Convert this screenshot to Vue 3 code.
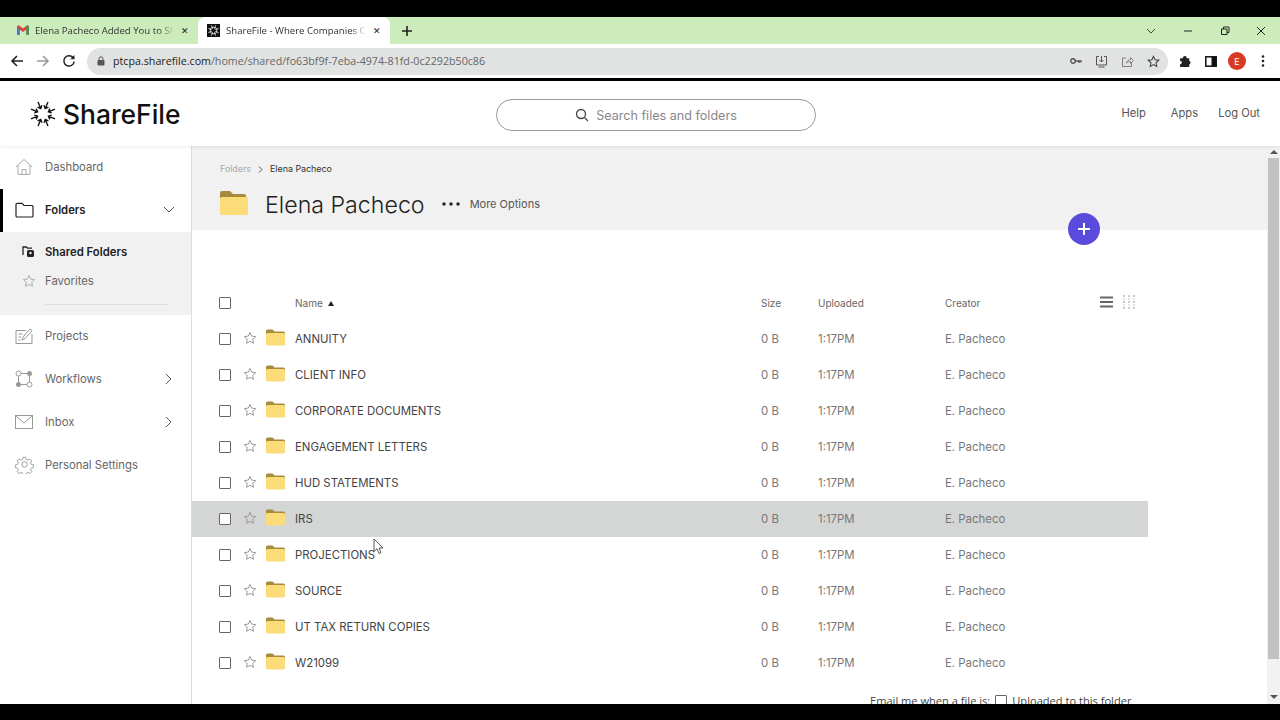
<template>
  <div class="screen">
    <div class="black-top"></div>

    <!-- chrome tabs -->
    <div class="tabstrip">
      <div class="tab">
        <svg class="favicon" width="12" height="10" viewBox="0 0 12 10">
          <path d="M0 1.5V10h2.6V4.500L6 7l3.4-2.5V10H12V1.500L10.500 0 6 3.400 1.500 0z" fill="#d9453a" />
          <path d="M9.400 4.500V10H12V1.500L10.500 0 9.400 1z" fill="#4a8f5c" />
          <path d="M0 1.500V10h2.600V4.500z" fill="#4d76c9" />
        </svg>
        <span class="tab-title">Elena Pacheco Added You to Sh</span>
        <span class="tab-x">✕</span>
      </div>
      <div class="tab active">
        <span class="sf-favicon">
          <svg width="11" height="11" viewBox="0 0 24 24"><path :d="burst" stroke="#fff" stroke-width="1.8" fill="none" /></svg>
        </span>
        <span class="tab-title">ShareFile - Where Companies Cc</span>
        <span class="tab-x">✕</span>
      </div>
      <svg class="new-tab" width="12" height="12" viewBox="0 0 12 12"><path d="M6 1v10M1 6h10" stroke="#222" stroke-width="1.6" /></svg>
      <div class="strip-right">
        <svg width="10" height="6" viewBox="0 0 10 6"><path d="M1 1l4 4 4-4" stroke="#444" fill="none" /></svg>
        <svg class="win-min" width="10" height="10" viewBox="0 0 10 10"><path d="M1 5h8" stroke="#222" /></svg>
        <svg class="win-max" width="10" height="10" viewBox="0 0 10 10"><path d="M1.500 3h5.500v5.500H1.500zM3.500 3V1h5.500v5.500H7" stroke="#222" fill="none" /></svg>
        <svg class="win-close" width="10" height="10" viewBox="0 0 10 10"><path d="M1 1l8 8M9 1l-8 8" stroke="#222" /></svg>
      </div>
    </div>

    <!-- chrome toolbar -->
    <div class="toolbar">
      <div class="nav-btns">
        <svg width="14" height="14" viewBox="0 0 14 14"><path d="M13 7H2M7 2L2 7l5 5" stroke="#222" stroke-width="1.6" fill="none" /></svg>
        <svg width="14" height="14" viewBox="0 0 14 14"><path d="M1 7h11M7 2l5 5-5 5" stroke="#999" stroke-width="1.6" fill="none" /></svg>
        <svg width="14" height="14" viewBox="0 0 14 14"><path d="M11.500 4.200A5.200 5.200 0 1 0 12.200 7.500" stroke="#222" stroke-width="1.5" fill="none" /><path d="M12.500 1v4.200H8.300z" fill="#222" /></svg>
      </div>
      <div class="addressbar">
        <svg width="8" height="10" viewBox="0 0 8 10"><path d="M2 4V2.800a2 2 0 0 1 4 0V4" stroke="#555" fill="none" /><rect x="0.5" y="4" width="7" height="5.500" rx="1" fill="#555" /></svg>
        <span class="url"><b>ptcpa.sharefile.com</b>/home/shared/fo63bf9f-7eba-4974-81fd-0c2292b50c86</span>
        <div class="addr-icons">
          <svg width="12" height="8" viewBox="0 0 12 8"><circle cx="3" cy="4" r="2.200" stroke="#555" stroke-width="1.4" fill="none" /><path d="M5 4h6.500M9 4v2M11 4v1.500" stroke="#555" stroke-width="1.4" fill="none" /></svg>
          <svg width="13" height="13" viewBox="0 0 13 13"><path d="M4 1.500H1.500v8.500h10V1.500H9M6.500 1v6M4.500 5l2 2 2-2M3.500 12h6" stroke="#555" fill="none" /></svg>
          <svg width="13" height="13" viewBox="0 0 13 13"><path d="M5 3H1.500v8.500h9V8M5.500 8C6 5.500 8 4.500 9.500 4.500V2.500L12.500 5.500 9.500 8.500V6.500C8 6.500 6.500 7 5.500 8z" stroke="#777" stroke-width="0.9" fill="none" /></svg>
          <svg width="13" height="13" viewBox="0 0 24 24"><path :d="star" stroke="#444" stroke-width="2" fill="none" /></svg>
        </div>
      </div>
      <div class="ext-icons">
        <svg width="14" height="14" viewBox="0 0 13 13"><path d="M1 4h2.500a2 2 0 0 1 3.500-1.500V4h2.500v2.300a1.800 1.800 0 0 1 0 3.400V12H1V9.500a1.800 1.800 0 0 0 1.500-2.500A1.800 1.800 0 0 0 1 6.500z" fill="#222" /></svg>
        <svg width="12" height="11" viewBox="0 0 12 11"><rect x="0.8" y="0.8" width="10.400" height="9.400" stroke="#111" stroke-width="1.5" fill="#fff" /><rect x="6.500" y="1" width="5" height="9" fill="#111" /></svg>
        <span class="avatar">E</span>
        <svg width="4" height="12" viewBox="0 0 4 12"><circle cx="2" cy="1.500" r="1.3" fill="#222" /><circle cx="2" cy="6" r="1.3" fill="#222" /><circle cx="2" cy="10.500" r="1.3" fill="#222" /></svg>
      </div>
    </div>
    <div class="black-line"></div>

    <!-- sharefile header -->
    <header class="app-header">
      <div class="brand">
        <svg width="26" height="26" viewBox="0 0 24 24"><path :d="burst" stroke="#111" stroke-width="1.25" fill="none" /></svg>
        <span>ShareFile</span>
      </div>
      <div class="search">
        <svg width="14" height="14" viewBox="0 0 14 14"><circle cx="6" cy="6" r="4.500" stroke="#444" stroke-width="1.3" fill="none" /><path d="M9.500 9.500L13 13" stroke="#444" stroke-width="1.3" /></svg>
        <span>Search files and folders</span>
      </div>
      <nav class="top-links">
        <a>Help</a>
        <a>Apps</a>
        <a>Log Out</a>
      </nav>
    </header>

    <div class="body">
      <aside class="sidebar">
        <div class="nav-item">
          <svg width="18" height="18" viewBox="0 0 18 18"><path d="M1 9l8-7.500L17 9M3 7.500V16.500h12V7.500M7 16.500V11.500h4v5" stroke="#aaa" fill="none" /></svg>
          <span>Dashboard</span>
        </div>
        <div class="nav-item selected">
          <svg width="19" height="16" viewBox="0 0 19 16"><path d="M1 14V2.500A1.200 1.200 0 0 1 2.200 1.300H7L9 3.500H17a1 1 0 0 1 1 1V14a1 1 0 0 1-1 1H2a1 1 0 0 1-1-1z" stroke="#222" stroke-width="1.2" fill="none" /></svg>
          <span>Folders</span>
          <svg width="12" height="7" viewBox="0 0 12 7"><path d="M1 1l5 5 5-5" stroke="#555" fill="none" /></svg>
        </div>
        <div class="subnav">
          <div class="sub-item strong">
            <svg width="13" height="13" viewBox="0 0 13 13"><path d="M1 10V2h3.500l1 1.200H10" stroke="#222" stroke-width="1.3" fill="none" /><rect x="5" y="5" width="7" height="7" rx="1.5" fill="#222" /><circle cx="8.500" cy="8" r="1.2" fill="#f1f1f1" /></svg>
            <span>Shared Folders</span>
          </div>
          <div class="sub-item">
            <svg width="14" height="14" viewBox="0 0 24 24"><path :d="star" stroke="#aaa" stroke-width="1.6" fill="none" /></svg>
            <span>Favorites</span>
          </div>
          <div class="sub-rule"></div>
        </div>
        <div class="nav-item">
          <svg width="19" height="18" viewBox="0 0 19 18"><path d="M17 7v9.500H1V3.500h10" stroke="#999" fill="none" /><path d="M7 13l1-3 7-8 2 1.700-7 8zM3.500 7h4M3.500 10h2.500M3.500 13h2" stroke="#999" fill="none" /></svg>
          <span>Projects</span>
        </div>
        <div class="nav-item">
          <svg width="18" height="18" viewBox="0 0 18 18"><circle cx="3.500" cy="3.500" r="2.500" stroke="#999" fill="none" /><circle cx="14.500" cy="3.500" r="2.500" fill="#999" /><circle cx="3.500" cy="14.500" r="2.500" fill="#999" /><circle cx="14.500" cy="14.500" r="2.500" stroke="#999" fill="none" /><path d="M6 3.500h6M3.500 6v6M14.500 6v6M6 14.500h6" stroke="#999" fill="none" /></svg>
          <span>Workflows</span>
          <svg width="7" height="12" viewBox="0 0 7 12"><path d="M1 1l5 5-5 5" stroke="#555" fill="none" /></svg>
        </div>
        <div class="nav-item">
          <svg width="18" height="14" viewBox="0 0 18 14"><rect x="0.5" y="0.5" width="17" height="13" stroke="#999" fill="none" /><path d="M1 1l8 7 8-7" stroke="#999" fill="none" /></svg>
          <span>Inbox</span>
          <svg width="7" height="12" viewBox="0 0 7 12"><path d="M1 1l5 5-5 5" stroke="#555" fill="none" /></svg>
        </div>
        <div class="nav-item">
          <svg width="19" height="19" viewBox="0 0 24 24"><circle cx="12" cy="12" r="3.500" stroke="#999" stroke-width="1.2" fill="none" /><path d="M10 2h4l.6 3 2.300 1 2.600-1.700 2.800 2.800-1.700 2.600 1 2.300 3 .6v4l-3 .6-1 2.300 1.700 2.600-2.800 2.800-2.600-1.700-2.300 1-.6 3h-4l-.6-3-2.300-1-2.600 1.700-2.800-2.800 1.700-2.600-1-2.300-3-.6v-4l3-.6 1-2.300-1.700-2.600 2.800-2.800 2.600 1.700 2.300-1z" transform="translate(1.1 1.1) scale(.9)" stroke="#999" stroke-width="1.3" fill="none" /></svg>
          <span>Personal Settings</span>
        </div>
      </aside>

      <main class="content">
        <section class="folder-head">
          <div class="crumbs">
            <span class="crumb-root">Folders</span>
            <svg width="5" height="7" viewBox="0 0 5 7"><path d="M1 .5l3 3-3 3" stroke="#555" fill="none" /></svg>
            <span>Elena Pacheco</span>
          </div>
          <div class="title-row">
            <svg width="28" height="26" viewBox="0 0 28 26">
              <path d="M0 24V3a2 2 0 0 1 2-2h8l3 3h11a2 2 0 0 1 2 2v3H0z" fill="#a68a3d" />
              <path d="M1.500 25L0 24V9a2 2 0 0 1 2-2h24a2 2 0 0 1 2 2v14a2 2 0 0 1-2 2z" fill="#fbdc78" />
            </svg>
            <h1>Elena Pacheco</h1>
            <svg class="dots" width="18" height="4" viewBox="0 0 18 4"><circle cx="2" cy="2" r="1.7" fill="#222" /><circle cx="9" cy="2" r="1.7" fill="#222" /><circle cx="16" cy="2" r="1.7" fill="#222" /></svg>
            <span class="more">More Options</span>
          </div>
        </section>

        <button class="fab">
          <svg width="14" height="14" viewBox="0 0 14 14"><path d="M7 1v12M1 7h12" stroke="#fff" stroke-width="2" /></svg>
        </button>

        <div class="table">
          <div class="row head">
            <span class="box"></span>
            <span></span>
            <span></span>
            <span class="col-name">Name <i class="sort"></i></span>
            <span>Size</span>
            <span>Uploaded</span>
            <span class="col-creator">
              Creator
              <span class="views">
                <svg width="13" height="12" viewBox="0 0 13 12"><path d="M0 1.500h13M0 6h13M0 10.500h13" stroke="#666" stroke-width="2" /></svg>
                <svg width="14" height="14" viewBox="0 0 14 14"><path d="M1 1h12M1 7h12M1 13h12" stroke="#bbb" stroke-width="1.4" stroke-dasharray="2 3" fill="none" /><path d="M1 4h12M1 10h12" stroke="#ccc" stroke-dasharray="2 3" fill="none" /></svg>
              </span>
            </span>
          </div>
          <div v-for="f in folders" :key="f" class="row" :class="{ hover: f === 'IRS' }">
            <span class="box"></span>
            <svg class="row-star" width="14" height="14" viewBox="0 0 24 24"><path :d="star" stroke="#999" stroke-width="1.7" fill="none" /></svg>
            <svg class="row-folder" width="19" height="17" viewBox="0 0 19 17">
              <path d="M0 16V2a1.500 1.500 0 0 1 1.500-1.500h5l2 2h9a1.500 1.500 0 0 1 1.500 1.500v2H0z" fill="#a68a3d" />
              <path d="M1 16.500L0 16V5.500A1.500 1.500 0 0 1 1.500 4h16A1.500 1.500 0 0 1 19 5.500V15a1.500 1.500 0 0 1-1.500 1.500z" fill="#fbdc78" />
            </svg>
            <span class="cell name">{{ f }}</span>
            <span class="cell">0 B</span>
            <span class="cell">1:17PM</span>
            <span class="cell">E. Pacheco</span>
          </div>
        </div>

        <div class="email-opts">
          <span>Email me when a file is:</span>
          <span class="box"></span>
          <span>Uploaded to this folder</span>
        </div>

        <!-- mouse pointer from the recording -->
        <svg class="cursor" width="11" height="17" viewBox="0 0 11 17"><path d="M1 1v12.500l3-2.800 2 4.800 2-.9-2-4.600h4z" stroke="#333" stroke-width="0.8" fill="#fff" /></svg>

        <div class="scrollbar">
          <i class="arrow up"></i>
          <div class="thumb"></div>
          <i class="arrow down"></i>
        </div>
      </main>
    </div>

    <div class="black-bottom"></div>
  </div>
</template>

<script setup>
const folders = [
  'ANNUITY',
  'CLIENT INFO',
  'CORPORATE DOCUMENTS',
  'ENGAGEMENT LETTERS',
  'HUD STATEMENTS',
  'IRS',
  'PROJECTIONS',
  'SOURCE',
  'UT TAX RETURN COPIES',
  'W21099'
]

const star = 'M12 2.500l2.900 6.300 6.800.8-5 4.700 1.300 6.800-6-3.400-6 3.400 1.300-6.800-5-4.700 6.800-.8z'

// eight arrows pointing at the centre of the ShareFile mark
const xy = (x, y) => `${x.toFixed(2)} ${y.toFixed(2)}`
const burst = Array.from({ length: 8 }, (_, i) => {
  const a = Math.PI / 8 + (i * Math.PI) / 4
  const tipX = 12 + 5.4 * Math.cos(a)
  const tipY = 12 + 5.4 * Math.sin(a)
  const barb = (d) => xy(tipX + 3.2 * Math.cos(a + d), tipY + 3.2 * Math.sin(a + d))
  return `M${xy(12 + 12 * Math.cos(a), 12 + 12 * Math.sin(a))}L${xy(tipX, tipY)}M${barb(-0.75)}L${xy(tipX, tipY)}L${barb(0.75)}`
}).join('')
</script>

<style>
html,
body {
  margin: 0;
  background: #000;
}
</style>

<style scoped>
.screen {
  width: 1280px;
  height: 720px;
  display: flex;
  flex-direction: column;
  overflow: hidden;
  background: #fff;
  font-family: Inter, "Liberation Sans", sans-serif;
  color: #555;
}

.black-top {
  height: 17px;
  background: #000;
  flex: none;
}

.black-line {
  height: 3px;
  background: #000;
  flex: none;
}

.black-bottom {
  height: 16px;
  background: #000;
  flex: none;
}

/* tabs */
.tabstrip {
  height: 27px;
  flex: none;
  display: flex;
  align-items: center;
  background: #cdecbb;
  font-family: "Open Sans", "Liberation Sans", sans-serif;
  font-size: 9.6px;
  color: #333;
}

.tab {
  width: 198px;
  height: 100%;
  box-sizing: border-box;
  padding: 0 9px 1px 17px;
  display: flex;
  align-items: center;
  flex: none;
}

.tab.active {
  width: 192px;
  padding-left: 9px;
  background: #fff;
  border-radius: 7px 7px 0 0;
}

.favicon {
  margin-right: 6px;
  flex: none;
}

.sf-favicon {
  width: 13px;
  height: 13px;
  margin-right: 6px;
  background: #111;
  display: flex;
  align-items: center;
  justify-content: center;
  flex: none;
}

.tab-title {
  flex: 1;
  overflow: hidden;
  white-space: nowrap;
  -webkit-mask-image: linear-gradient(to right, #000 88%, transparent 98%);
  mask-image: linear-gradient(to right, #000 88%, transparent 98%);
}

.tab-x {
  font-size: 9px;
  color: #222;
  margin-left: 4px;
}

.new-tab {
  margin-left: 11px;
}

.strip-right {
  margin-left: auto;
  display: flex;
  align-items: center;
  padding-right: 14px;
}

.win-min {
  margin-left: 27px;
}

.win-max {
  margin-left: 27px;
}

.win-close {
  margin-left: 26px;
}

/* toolbar */
.toolbar {
  height: 34px;
  flex: none;
  display: flex;
  align-items: center;
  background: #fff;
}

.nav-btns {
  width: 87px;
  box-sizing: border-box;
  padding-left: 10px;
  display: flex;
  gap: 12px;
  flex: none;
}

.addressbar {
  width: 1081px;
  height: 27px;
  box-sizing: border-box;
  padding: 0 8px 0 10px;
  border-radius: 14px;
  background: #e1e2e2;
  display: flex;
  align-items: center;
  flex: none;
}

.url {
  margin: 0 0 1px 8px;
  font-family: "Open Sans", "Liberation Sans", sans-serif;
  font-size: 10.7px;
  color: #666;
  white-space: nowrap;
}

.url b {
  font-weight: 400;
  color: #222;
}

.addr-icons {
  margin-left: auto;
  display: flex;
  align-items: center;
  gap: 13px;
}

.ext-icons {
  flex: 1;
  padding-left: 11px;
  display: flex;
  align-items: center;
  gap: 12px;
}

.avatar {
  width: 18px;
  height: 18px;
  margin: 0 3px 0 -1px;
  border-radius: 50%;
  background: #d93a22;
  color: #fff;
  font-size: 9px;
  display: flex;
  align-items: center;
  justify-content: center;
}

/* app header */
.app-header {
  height: 65px;
  flex: none;
  display: flex;
  align-items: center;
  position: relative;
  box-shadow: 0 1px 3px rgba(0, 0, 0, 0.08);
  z-index: 2;
  background: #fff;
}

.brand {
  width: 465px;
  box-sizing: border-box;
  padding-left: 30px;
  display: flex;
  align-items: center;
  gap: 7px;
  flex: none;
  font-size: 26.4px;
  font-weight: 500;
  color: #111;
}

.search {
  width: 320px;
  height: 32px;
  margin: 2px 0 0 31px;
  padding-top: 1px;
  box-sizing: border-box;
  border: 1px solid #999;
  border-radius: 16px;
  display: flex;
  align-items: center;
  justify-content: center;
  gap: 7px;
  font-size: 12.6px;
  color: #888;
  flex: none;
}

.top-links {
  margin-left: auto;
  padding: 0 20px 2px 0;
  display: flex;
  gap: 20px;
  font-size: 11.2px;
  color: #555;
}

.top-links a:first-child {
  margin-right: 5px;
}

/* sidebar */
.body {
  flex: 1;
  min-height: 0;
  display: flex;
}

.sidebar {
  width: 192px;
  flex: none;
  box-sizing: border-box;
  border-right: 1px solid #ddd;
  font-size: 11.3px;
  color: #666;
}

.nav-item {
  height: 43px;
  box-sizing: border-box;
  padding: 0 19px 2px 15px;
  display: grid;
  grid-template-columns: 30px 1fr auto;
  align-items: center;
}

.nav-item.selected {
  border-left: 3px solid #000;
  padding: 0 16px 2px 12px;
  color: #222;
  font-weight: 600;
}

.subnav {
  height: 83px;
  box-sizing: border-box;
  padding: 5px 23px 0 22px;
  background: #f1f1f1;
}

.sub-item {
  height: 29px;
  display: grid;
  grid-template-columns: 23px 1fr;
  align-items: center;
}

.sub-item.strong {
  color: #222;
  font-weight: 600;
}

.sub-rule {
  margin: 9px 0 0 23px;
  height: 1px;
  background: #e0e0e0;
}

/* content */
.content {
  flex: 1;
  min-width: 0;
  position: relative;
  overflow: hidden;
}

.folder-head {
  height: 84px;
  box-sizing: border-box;
  padding: 17px 0 0 28px;
  background: #f1f1f1;
}

.crumbs {
  display: flex;
  align-items: center;
  gap: 7px;
  font-size: 8.9px;
  line-height: 12px;
  color: #333;
}

.crumb-root {
  color: #aaa;
}

.title-row {
  height: 30px;
  margin-top: 13px;
  display: flex;
  align-items: center;
}

.title-row h1 {
  margin: 4px 0 0 17px;
  font-size: 23.2px;
  font-weight: 300;
  color: #222;
  line-height: 30px;
}

.dots {
  margin: 2px 0 0 17px;
}

.more {
  margin: 2px 0 0 10px;
  font-size: 11px;
  color: #555;
}

.fab {
  position: absolute;
  left: 876px;
  top: 67px;
  width: 32px;
  height: 32px;
  padding: 0;
  border: none;
  border-radius: 50%;
  background: #5a4bdc;
  display: flex;
  align-items: center;
  justify-content: center;
}

.table {
  margin-top: 55px;
  width: 956px;
  font-size: 11.4px;
}

.row {
  height: 36px;
  box-sizing: border-box;
  padding-left: 27px;
  display: grid;
  grid-template-columns: 24px 23px 29px 466px 57px 127px 1fr;
  align-items: center;
  color: #777;
}

.row.head {
  font-size: 10px;
  color: #666;
}

.row.hover {
  background: #d4d6d6;
}

.cell {
  margin-bottom: 1px;
}

.box {
  width: 12px;
  height: 12px;
  box-sizing: border-box;
  border: 1.5px solid #666;
  border-radius: 1px;
  background: #fff;
}

.row-star {
  margin-bottom: 2px;
}

.row-folder {
  margin-top: -4px;
}

.name {
  color: #444;
}

.col-name {
  display: flex;
  align-items: center;
  gap: 5px;
}

.sort {
  width: 0;
  height: 0;
  border-left: 3.5px solid transparent;
  border-right: 3.5px solid transparent;
  border-bottom: 5px solid #222;
}

.col-creator {
  display: flex;
  align-items: center;
  padding-right: 12px;
}

.views {
  margin-left: auto;
  display: flex;
  align-items: center;
  gap: 9px;
  margin-top: -3px;
}

.email-opts {
  margin-top: 12px;
  padding-left: 678px;
  display: flex;
  align-items: center;
  gap: 5px;
  font-family: "Open Sans", "Liberation Sans", sans-serif;
  font-size: 11.1px;
  color: #444;
  white-space: nowrap;
}

.cursor {
  position: absolute;
  left: 181px;
  top: 392px;
}

.scrollbar {
  position: absolute;
  right: 0;
  top: 0;
  bottom: 0;
  width: 13px;
  background: #f1f1f1;
  display: flex;
  flex-direction: column;
  align-items: center;
}

.thumb {
  width: 11px;
  height: 501px;
  margin-top: 4px;
  background: #c1c1c1;
}

.arrow {
  width: 0;
  height: 0;
  margin-top: 4px;
  border-left: 4px solid transparent;
  border-right: 4px solid transparent;
}

.arrow.up {
  border-bottom: 4px solid #555;
}

.arrow.down {
  margin-top: auto;
  margin-bottom: 5px;
  border-top: 4px solid #555;
}
</style>
